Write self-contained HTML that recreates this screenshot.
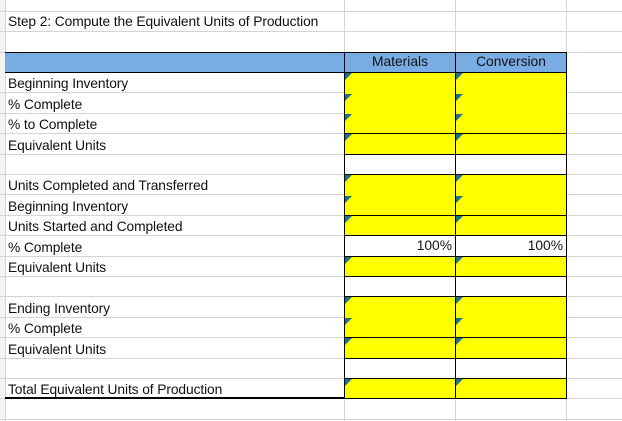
<!DOCTYPE html>
<html><head><meta charset="utf-8"><style>
body{margin:0;width:622px;height:421px;overflow:hidden;background:#fff;position:relative;font-family:"Liberation Sans",sans-serif;font-size:13.8px;color:#111}
div{position:absolute;box-sizing:border-box}
.h{left:0;width:622px;height:1px;background:#d4d4d4}
.v{top:0;height:421px;width:1px;background:#d4d4d4}
.t{left:8px;white-space:nowrap;line-height:21px;letter-spacing:-0.1px}
.y{background:#ff0;border:1.5px solid #000}
.w{background:#fff;border:1.5px solid #000}
.m{width:0;height:0;border-top:7px solid #1a7290;border-right:7px solid transparent}
</style></head><body>
<div class="v" style="left:5px"></div>
<div class="v" style="left:344px"></div>
<div class="v" style="left:455px"></div>
<div class="v" style="left:566px"></div>
<div style="left:0;top:0;width:5px;height:421px;background:#f3f3f3"></div>
<div class="h" style="top:11px"></div><div class="h" style="top:31px"></div><div class="h" style="top:52px"></div>
<div class="h" style="top:92px"></div><div class="h" style="top:113px"></div><div class="h" style="top:133px"></div><div class="h" style="top:154px"></div><div class="h" style="top:174px"></div><div class="h" style="top:194px"></div><div class="h" style="top:215px"></div><div class="h" style="top:235px"></div><div class="h" style="top:256px"></div><div class="h" style="top:276px"></div><div class="h" style="top:296px"></div><div class="h" style="top:317px"></div><div class="h" style="top:337px"></div><div class="h" style="top:358px"></div><div class="h" style="top:378px"></div><div class="h" style="top:398px"></div><div class="h" style="top:419px"></div>

<div class="t" style="top:11px">Step 2: Compute the Equivalent Units of Production</div>

<div style="left:5px;top:52px;width:562px;height:21px;background:#79ace3;border-top:1.5px solid #000;border-bottom:1.5px solid #000"></div>
<div style="left:344px;top:52px;width:112px;height:21px;border:1.5px solid #000;text-align:center;line-height:18px">Materials</div>
<div style="left:455px;top:52px;width:112px;height:21px;border:1.5px solid #000;text-align:center;line-height:18px">Conversion</div>

<div class="y" style="left:344px;top:72px;width:112px;height:62px"></div><div class="y" style="left:455px;top:72px;width:112px;height:62px"></div>
<div class="y" style="left:344px;top:133px;width:112px;height:22px"></div><div class="y" style="left:455px;top:133px;width:112px;height:22px"></div>
<div class="w" style="left:344px;top:154px;width:112px;height:21px"></div><div class="w" style="left:455px;top:154px;width:112px;height:21px"></div>
<div class="y" style="left:344px;top:174px;width:112px;height:42px"></div><div class="y" style="left:455px;top:174px;width:112px;height:42px"></div>
<div class="y" style="left:344px;top:215px;width:112px;height:21px"></div><div class="y" style="left:455px;top:215px;width:112px;height:21px"></div>
<div class="w" style="left:344px;top:235px;width:112px;height:22px;text-align:right;padding-right:3px;line-height:19px">100%</div><div class="w" style="left:455px;top:235px;width:112px;height:22px;text-align:right;padding-right:3px;line-height:19px">100%</div>
<div class="y" style="left:344px;top:256px;width:112px;height:21px"></div><div class="y" style="left:455px;top:256px;width:112px;height:21px"></div>
<div class="w" style="left:344px;top:276px;width:112px;height:21px"></div><div class="w" style="left:455px;top:276px;width:112px;height:21px"></div>
<div class="y" style="left:344px;top:296px;width:112px;height:42px"></div><div class="y" style="left:455px;top:296px;width:112px;height:42px"></div>
<div class="y" style="left:344px;top:337px;width:112px;height:22px"></div><div class="y" style="left:455px;top:337px;width:112px;height:22px"></div>
<div class="w" style="left:344px;top:358px;width:112px;height:21px"></div><div class="w" style="left:455px;top:358px;width:112px;height:21px"></div>
<div class="y" style="left:344px;top:378px;width:112px;height:21px"></div><div class="y" style="left:455px;top:378px;width:112px;height:21px"></div>
<div style="left:5px;top:397px;width:340px;height:1.5px;background:#000"></div>

<div class="m" style="left:345px;top:73px"></div><div class="m" style="left:456px;top:73px"></div>
<div class="m" style="left:345px;top:94px"></div><div class="m" style="left:456px;top:94px"></div>
<div class="m" style="left:345px;top:114px"></div><div class="m" style="left:456px;top:114px"></div>
<div class="m" style="left:345px;top:134px"></div><div class="m" style="left:456px;top:134px"></div>
<div class="m" style="left:345px;top:175px"></div><div class="m" style="left:456px;top:175px"></div>
<div class="m" style="left:345px;top:196px"></div><div class="m" style="left:456px;top:196px"></div>
<div class="m" style="left:345px;top:216px"></div><div class="m" style="left:456px;top:216px"></div>
<div class="m" style="left:345px;top:257px"></div><div class="m" style="left:456px;top:257px"></div>
<div class="m" style="left:345px;top:297px"></div><div class="m" style="left:456px;top:297px"></div>
<div class="m" style="left:345px;top:318px"></div><div class="m" style="left:456px;top:318px"></div>
<div class="m" style="left:345px;top:338px"></div><div class="m" style="left:456px;top:338px"></div>
<div class="m" style="left:345px;top:379px"></div><div class="m" style="left:456px;top:379px"></div>

<div class="t" style="top:73px">Beginning Inventory</div>
<div class="t" style="top:94px">% Complete</div>
<div class="t" style="top:114px">% to Complete</div>
<div class="t" style="top:135px">Equivalent Units</div>
<div class="t" style="top:175px">Units Completed and Transferred</div>
<div class="t" style="top:196px">Beginning Inventory</div>
<div class="t" style="top:216px">Units Started and Completed</div>
<div class="t" style="top:237px">% Complete</div>
<div class="t" style="top:257px">Equivalent Units</div>
<div class="t" style="top:298px">Ending Inventory</div>
<div class="t" style="top:318px">% Complete</div>
<div class="t" style="top:339px">Equivalent Units</div>
<div class="t" style="top:379px">Total Equivalent Units of Production</div>
</body></html>
